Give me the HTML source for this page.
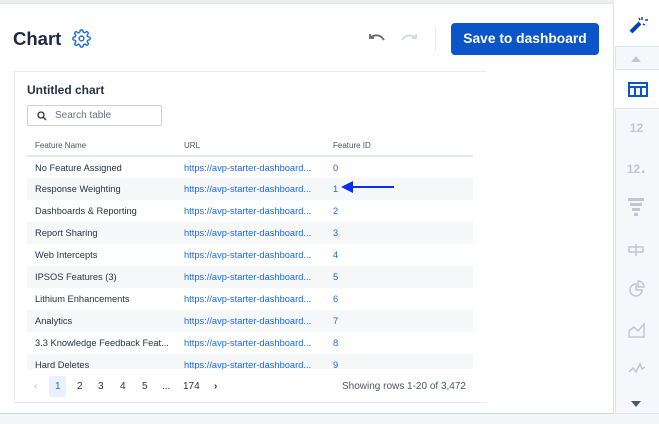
<html><head><style>
*{box-sizing:border-box;margin:0;padding:0}
body{width:659px;height:424px;overflow:hidden;background:#f4f5f8;font-family:"Liberation Sans",sans-serif;position:relative}
.main{position:absolute;left:0;top:3px;width:614px;height:411px;background:#fff;border-top:1px solid #e3e6ea;border-right:1px solid #dde1e6;border-bottom:1px solid #cfd3d9}
.abs{position:absolute}
h1{position:absolute;left:13px;top:28px;font-size:18.5px;font-weight:bold;color:#1c2a44}
.btn{position:absolute;left:451px;top:23px;width:148px;height:32px;background:#0b55c9;border-radius:4px;color:#fff;font-weight:bold;font-size:13.8px;text-align:center;line-height:32px}
.card{position:absolute;left:14px;top:71px;width:472px;height:332px;border:1px solid #e8ebef;border-right:none;border-bottom:1px solid #e8ebef}
.ct{position:absolute;left:27px;top:83px;font-size:12px;font-weight:bold;color:#253149}
.search{position:absolute;left:27px;top:105px;width:135px;height:21px;border:1px solid #cdd1d7;border-radius:2px;font-size:10px;color:#6b7280;padding:4px 0 0 27px}
table{position:absolute;left:27px;top:135px;width:446px;border-collapse:collapse;font-size:9.3px}
th{height:21px;text-align:left;font-weight:normal;color:#4b5566;font-size:8px;border-bottom:2px solid #e4e7eb;padding-left:8px}
td{height:22px;padding-left:8px;color:#2a3140}
td.l{color:#1a6ae0}
tr:nth-child(odd) td{background:#f6f7f9}
.pg{position:absolute;top:381px;font-size:10px;color:#2a3140}
.side{position:absolute;left:614px;top:0;width:45px;height:414px;background:#fff}
.sp{position:absolute;left:615px;width:44px;background:#f5f7fa;border:1px solid #dfe3ea;border-right:none}
.si{position:absolute;left:614px;width:45px;text-align:center;color:#c3c7cd;font-weight:bold;font-size:12px}
</style></head><body>
<div class="abs" style="left:0;top:0;width:614px;height:3px;background:#eceef1"></div>
<div class="main"></div>
<h1>Chart</h1>
<svg class="abs" style="left:72px;top:29px" width="19" height="19" viewBox="0 0 24 24" fill="none" stroke="#1a6ae0" stroke-width="1.8"><circle cx="12" cy="12" r="3"/><path d="M19.4 15a1.7 1.7 0 0 0 .3 1.8l.1.1a2 2 0 1 1-2.8 2.8l-.1-.1a1.7 1.7 0 0 0-1.8-.3 1.7 1.7 0 0 0-1 1.5V21a2 2 0 1 1-4 0v-.1a1.7 1.7 0 0 0-1.1-1.5 1.7 1.7 0 0 0-1.8.3l-.1.1a2 2 0 1 1-2.800-2.8l.1-.1a1.7 1.7 0 0 0 .3-1.8 1.7 1.7 0 0 0-1.5-1H3a2 2 0 1 1 0-4h.1a1.7 1.7 0 0 0 1.5-1.1 1.7 1.7 0 0 0-.3-1.8l-.1-.1a2 2 0 1 1 2.8-2.8l.1.1a1.7 1.7 0 0 0 1.8.3H9a1.7 1.7 0 0 0 1-1.5V3a2 2 0 1 1 4 0v.1a1.7 1.7 0 0 0 1 1.5 1.7 1.7 0 0 0 1.8-.3l.1-.1a2 2 0 1 1 2.8 2.8l-.1.1a1.7 1.7 0 0 0-.3 1.8V9a1.7 1.7 0 0 0 1.5 1H21a2 2 0 1 1 0 4h-.1a1.7 1.7 0 0 0-1.5 1z"/></svg>
<svg class="abs" style="left:368px;top:33px" width="18" height="12" viewBox="0 0 18 12" fill="none" stroke="#5d6675" stroke-width="1.8"><path d="M3 4c5-3 10-2 13 3M2 1v4h4"/></svg>
<svg class="abs" style="left:400px;top:33px" width="18" height="12" viewBox="0 0 18 12" fill="none" stroke="#d3d7dd" stroke-width="1.8"><path d="M15 4C10 1 5 2 2 7M16 1v4h-4"/></svg>
<div class="abs" style="left:435px;top:27px;width:1px;height:24px;background:#e5e8ec"></div>
<div class="btn">Save to dashboard</div>
<div class="card"></div>
<div class="ct">Untitled chart</div>
<div class="search">Search table</div>
<svg class="abs" style="left:37px;top:111px" width="10" height="10" viewBox="0 0 10 10" fill="none" stroke="#333" stroke-width="1.3"><circle cx="4" cy="4" r="3"/><path d="M6.3 6.3L9 9"/></svg>
<table>
<tr><th style="width:149px">Feature Name</th><th style="width:149px">URL</th><th>Feature ID</th></tr>
<tr><td>No Feature Assigned</td><td class="l">https://avp-starter-dashboard...</td><td class="l">0</td></tr>
<tr><td>Response Weighting</td><td class="l">https://avp-starter-dashboard...</td><td class="l">1</td></tr>
<tr><td>Dashboards &amp; Reporting</td><td class="l">https://avp-starter-dashboard...</td><td class="l">2</td></tr>
<tr><td>Report Sharing</td><td class="l">https://avp-starter-dashboard...</td><td class="l">3</td></tr>
<tr><td>Web Intercepts</td><td class="l">https://avp-starter-dashboard...</td><td class="l">4</td></tr>
<tr><td>IPSOS Features (3)</td><td class="l">https://avp-starter-dashboard...</td><td class="l">5</td></tr>
<tr><td>Lithium Enhancements</td><td class="l">https://avp-starter-dashboard...</td><td class="l">6</td></tr>
<tr><td>Analytics</td><td class="l">https://avp-starter-dashboard...</td><td class="l">7</td></tr>
<tr><td>3.3 Knowledge Feedback Feat...</td><td class="l">https://avp-starter-dashboard...</td><td class="l">8</td></tr>
<tr><td>Hard Deletes</td><td class="l">https://avp-starter-dashboard...</td><td class="l">9</td></tr>
</table>
<div class="abs" style="left:15px;top:369px;width:470px;height:33px;background:#fff"></div>
<svg class="abs" style="left:341px;top:181px" width="53" height="12" viewBox="0 0 53 12"><path d="M0 6L12 0V12Z" fill="#0a2ff0"/><rect x="10" y="5" width="43" height="2" fill="#0a2ff0"/></svg>
<div class="abs" style="left:49px;top:376px;width:17px;height:21px;background:#e8f1fd;border-radius:2px"></div>
<div class="pg" style="left:34px;color:#bbb">‹</div>
<div class="pg" style="left:55px;color:#1a6ae0">1</div>
<div class="pg" style="left:77px">2</div>
<div class="pg" style="left:98px">3</div>
<div class="pg" style="left:120px">4</div>
<div class="pg" style="left:142px">5</div>
<div class="pg" style="left:162px">...</div>
<div class="pg" style="left:183px">174</div>
<div class="pg" style="left:214px;font-weight:bold">›</div>
<div class="pg" style="left:342px;color:#4b5566">Showing rows 1-20 of 3,472</div>
<div class="side"></div>
<svg class="abs" style="left:628px;top:15px" width="20" height="20" viewBox="0 0 20 20"><path d="M3 17L12 8" stroke="#0b3fb0" stroke-width="4"/><path d="M14 2v3M17 5h3M15 9l2 1M11 3l1 2" stroke="#0b3fb0" stroke-width="1.5"/></svg>
<div class="sp" style="top:46px;height:24px"></div>
<svg class="abs" style="left:631px;top:56px" width="10" height="6"><path d="M0 6L5 0L10 6Z" fill="#c3c7cd"/></svg>
<svg class="abs" style="left:628px;top:82px" width="20" height="15" viewBox="0 0 20 15" fill="none" stroke="#0b55c9" stroke-width="2"><rect x="1" y="1" width="18" height="13"/><path d="M1 5h18M7 5v9M13 5v9"/></svg>
<div class="sp" style="top:108px;height:306px"></div>
<div class="si" style="top:121px">12</div>
<div class="si" style="top:162px">12<span style="font-size:6px">▲</span></div>
<svg class="abs" style="left:628px;top:198px" width="16" height="18" viewBox="0 0 16 18" fill="#c3c7cd"><rect x="0" y="0" width="16" height="3"/><rect x="2" y="5" width="12" height="3"/><rect x="4" y="10" width="8" height="3"/><rect x="6" y="15" width="4" height="3"/></svg>
<svg class="abs" style="left:628px;top:244px" width="16" height="12" fill="none" stroke="#c3c7cd" stroke-width="1.5"><rect x="1" y="3" width="14" height="5"/><path d="M8 0v12"/></svg>
<svg class="abs" style="left:628px;top:279px" width="18" height="18" fill="none" stroke="#c3c7cd" stroke-width="1.5"><path d="M8 5a6 6 0 1 0 6 6H8z"/><path d="M10 2a6 6 0 0 1 6 6h-6z"/></svg>
<svg class="abs" style="left:628px;top:322px" width="18" height="16" fill="none" stroke="#c3c7cd" stroke-width="1.5"><path d="M1 15V9l5-4 4 4 6-7v13z"/></svg>
<svg class="abs" style="left:628px;top:362px" width="18" height="12" fill="none" stroke="#c3c7cd" stroke-width="1.5"><path d="M1 10l4-4 3 4 4-8 2 5 3-2"/></svg>
<svg class="abs" style="left:631px;top:401px" width="10" height="6"><path d="M0 0L5 6L10 0Z" fill="#4d5873"/></svg>
</body></html>
